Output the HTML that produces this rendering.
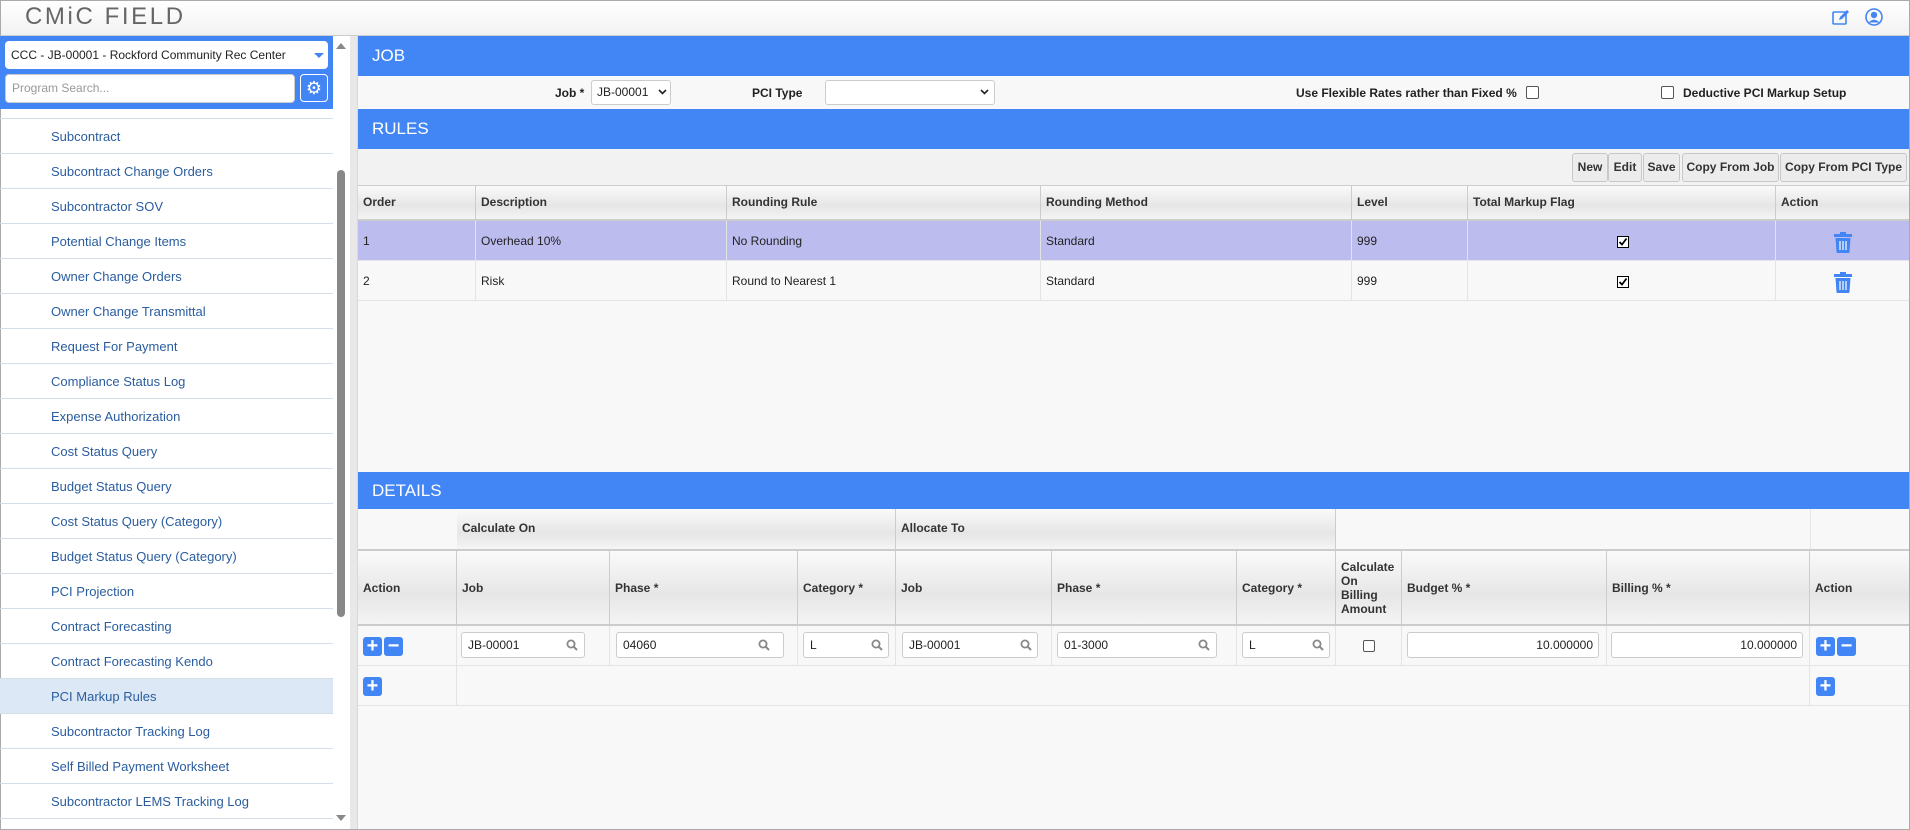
<!DOCTYPE html>
<html style="overflow:hidden;width:1910px;height:830px"><head><meta charset="utf-8"><style>
*{box-sizing:border-box;margin:0;padding:0}
body{width:1910px;height:830px;overflow:hidden;background:#fff;font-family:"Liberation Sans",Arial,sans-serif;font-size:12px;color:#222;position:relative}
.a{position:absolute}
.hdr{left:0;top:0;width:1910px;height:36px;background:linear-gradient(#fff,#f2f2f2);border:1px solid #aaa;border-bottom:1px solid #ccc}
.logo{left:25px;top:3px;font-size:24px;color:#666;letter-spacing:2.6px;font-weight:normal}
.side{left:0;top:36px;width:333px;height:794px;background:#fff;border-left:1px solid #aaa}
.sb{left:0;top:36px;width:333px;height:73px;background:#4285f4}
.item{left:0;width:333px;height:35px;border-bottom:1px solid #d5dde6;color:#2a5d9f;font-size:13px;line-height:35px;padding-left:51px}
.bar{left:358px;width:1551px;background:#4285f4;color:#fff;font-size:17px;padding-left:14px}
.th{background:linear-gradient(#fafafa,#e6e6e6 60%,#f4f4f4);border-right:1px solid #ccc;border-bottom:2px solid #ccc;font-weight:bold;color:#333;font-size:12px;padding-left:5px}
.td{border-right:1px solid #e4e4e4;border-bottom:1px solid #e4e4e4;font-size:12px;padding-left:5px}
.btn{top:153px;height:29px;border:1px solid #c8c8c8;border-radius:3px;background:#ececec;font-weight:bold;font-size:12px;line-height:27px;text-align:center;color:#333}
.inp{height:26px;background:#fff;border:1px solid #ccc;border-radius:3px;font-size:12px;line-height:24px;padding-left:6px}
.cb{width:13px;height:13px;border:1px solid #555;border-radius:2px;background:#fff}
.pm{width:19px;height:19px;background:#4285f4;border-radius:3px;color:#fff;font-weight:bold;font-size:20px;line-height:18px;text-align:center}
.mg{width:12px;height:12px}
</style></head><body>
<div class="a hdr"></div>
<div class="a logo">CMiC FIELD</div>
<svg class="a" style="left:1832px;top:9px" width="18" height="17" viewBox="0 0 18 17"><rect x="1" y="3" width="13" height="12" fill="none" stroke="#4285f4" stroke-width="1.6" rx="1"/><path d="M7 11 L8 8 L15 1 L17 3 L10 10 Z" fill="#4285f4"/></svg>
<svg class="a" style="left:1865px;top:8px" width="18" height="18" viewBox="0 0 18 18"><circle cx="9" cy="9" r="8" fill="none" stroke="#4285f4" stroke-width="1.6"/><circle cx="9" cy="7" r="3.2" fill="#4285f4"/><path d="M3.5 14.5 Q9 9 14.5 14.5" fill="#4285f4"/></svg>

<div class="a side"></div>
<div class="a sb"></div>
<div class="a" style="left:5px;top:41px;width:323px;height:28px;background:#fff;border-radius:4px;font-size:12px;line-height:28px;padding-left:6px;color:#222">CCC - JB-00001 - Rockford Community Rec Center</div>
<div class="a" style="left:314px;top:53px;width:0;height:0;border-left:5px solid transparent;border-right:5px solid transparent;border-top:5px solid #4285f4"></div>
<div class="a" style="left:5px;top:74px;width:290px;height:29px;background:#fff;border-radius:4px;border:1px solid #ccc;font-size:12px;line-height:27px;padding-left:6px;color:#999">Program Search...</div>
<div class="a" style="left:300px;top:74px;width:28px;height:28px;border:1px solid #fff;border-radius:4px;color:#fff;font-size:18px;line-height:26px;text-align:center">⚙</div>

<div class="a" style="left:0;top:118px;width:333px;height:1px;background:#d5dde6"></div>
<div class="a item" style="top:119px">Subcontract</div>
<div class="a item" style="top:154px">Subcontract Change Orders</div>
<div class="a item" style="top:189px">Subcontractor SOV</div>
<div class="a item" style="top:224px">Potential Change Items</div>
<div class="a item" style="top:259px">Owner Change Orders</div>
<div class="a item" style="top:294px">Owner Change Transmittal</div>
<div class="a item" style="top:329px">Request For Payment</div>
<div class="a item" style="top:364px">Compliance Status Log</div>
<div class="a item" style="top:399px">Expense Authorization</div>
<div class="a item" style="top:434px">Cost Status Query</div>
<div class="a item" style="top:469px">Budget Status Query</div>
<div class="a item" style="top:504px">Cost Status Query (Category)</div>
<div class="a item" style="top:539px">Budget Status Query (Category)</div>
<div class="a item" style="top:574px">PCI Projection</div>
<div class="a item" style="top:609px">Contract Forecasting</div>
<div class="a item" style="top:644px">Contract Forecasting Kendo</div>
<div class="a item" style="top:679px;background:#dce8f5">PCI Markup Rules</div>
<div class="a item" style="top:714px">Subcontractor Tracking Log</div>
<div class="a item" style="top:749px">Self Billed Payment Worksheet</div>
<div class="a item" style="top:784px">Subcontractor LEMS Tracking Log</div>

<div class="a" style="left:333px;top:36px;width:17px;height:794px;background:#fff"></div>
<div class="a" style="left:336px;top:43px;border-left:5px solid transparent;border-right:5px solid transparent;border-bottom:6px solid #888"></div>
<div class="a" style="left:337px;top:170px;width:8px;height:447px;background:#888;border-radius:4px"></div>
<div class="a" style="left:336px;top:815px;border-left:5px solid transparent;border-right:5px solid transparent;border-top:6px solid #888"></div>
<div class="a" style="left:350px;top:36px;width:8px;height:794px;background:#e8e8e8;border-right:1px solid #d8d8d8"></div>
<div class="a" style="left:358px;top:36px;width:1551px;height:793px;background:#f8f8f8"></div>
<div class="a" style="left:1909px;top:0;width:1px;height:830px;background:#aaa"></div>
<div class="a" style="left:0;top:829px;width:1910px;height:1px;background:#aaa"></div>

<div class="a bar" style="top:36px;height:40px;line-height:40px">JOB</div>
<div class="a" style="left:555px;top:86px;font-weight:bold;font-size:12px">Job *</div>
<div class="a inp" style="left:591px;top:80px;width:80px;height:25px;line-height:23px;padding-left:5px">JB-00001</div>
<svg class="a" style="left:658px;top:89px" width="9" height="6"><path d="M1 1 L4.5 4.5 L8 1" stroke="#222" stroke-width="1.6" fill="none"/></svg>
<div class="a" style="left:752px;top:86px;font-weight:bold">PCI Type</div>
<div class="a inp" style="left:825px;top:80px;width:170px;height:25px"></div>
<svg class="a" style="left:980px;top:89px" width="9" height="6"><path d="M1 1 L4.5 4.5 L8 1" stroke="#222" stroke-width="1.6" fill="none"/></svg>
<div class="a" style="left:1296px;top:86px;font-weight:bold">Use Flexible Rates rather than Fixed %</div>
<div class="a cb" style="left:1526px;top:86px"></div>
<div class="a cb" style="left:1661px;top:86px"></div>
<div class="a" style="left:1683px;top:86px;font-weight:bold">Deductive PCI Markup Setup</div>

<div class="a bar" style="top:109px;height:40px;line-height:40px">RULES</div>
<div class="a" style="left:358px;top:149px;width:1551px;height:37px;background:#f2f2f2;border-bottom:1px solid #ccc"></div>
<div class="a btn" style="left:1572px;width:36px">New</div>
<div class="a btn" style="left:1608px;width:34px">Edit</div>
<div class="a btn" style="left:1643px;width:37px">Save</div>
<div class="a btn" style="left:1682px;width:97px">Copy From Job</div>
<div class="a btn" style="left:1780px;width:127px">Copy From PCI Type</div>

<div class="a th" style="left:358px;top:186px;width:118px;height:35px;line-height:33px">Order</div>
<div class="a th" style="left:476px;top:186px;width:251px;height:35px;line-height:33px">Description</div>
<div class="a th" style="left:727px;top:186px;width:314px;height:35px;line-height:33px">Rounding Rule</div>
<div class="a th" style="left:1041px;top:186px;width:311px;height:35px;line-height:33px">Rounding Method</div>
<div class="a th" style="left:1352px;top:186px;width:116px;height:35px;line-height:33px">Level</div>
<div class="a th" style="left:1468px;top:186px;width:308px;height:35px;line-height:33px">Total Markup Flag</div>
<div class="a th" style="left:1776px;top:186px;width:133px;height:35px;line-height:33px;border-right:0">Action</div>

<div class="a" style="left:358px;top:221px;width:1551px;height:40px;background:#bcbcef"></div>
<div class="a td" style="left:358px;top:221px;width:118px;height:40px;line-height:40px">1</div>
<div class="a td" style="left:476px;top:221px;width:251px;height:40px;line-height:40px">Overhead 10%</div>
<div class="a td" style="left:727px;top:221px;width:314px;height:40px;line-height:40px">No Rounding</div>
<div class="a td" style="left:1041px;top:221px;width:311px;height:40px;line-height:40px">Standard</div>
<div class="a td" style="left:1352px;top:221px;width:116px;height:40px;line-height:40px">999</div>
<div class="a td" style="left:1468px;top:221px;width:308px;height:40px"></div>
<div class="a td" style="left:1776px;top:221px;width:133px;height:40px;border-right:0"></div>
<div class="a td" style="left:358px;top:261px;width:118px;height:40px;line-height:40px">2</div>
<div class="a td" style="left:476px;top:261px;width:251px;height:40px;line-height:40px">Risk</div>
<div class="a td" style="left:727px;top:261px;width:314px;height:40px;line-height:40px">Round to Nearest 1</div>
<div class="a td" style="left:1041px;top:261px;width:311px;height:40px;line-height:40px">Standard</div>
<div class="a td" style="left:1352px;top:261px;width:116px;height:40px;line-height:40px">999</div>
<div class="a td" style="left:1468px;top:261px;width:308px;height:40px"></div>
<div class="a td" style="left:1776px;top:261px;width:133px;height:40px;border-right:0"></div>
<svg class="a" style="left:1617px;top:236px" width="12" height="12"><rect x=".5" y=".5" width="11" height="11" fill="#fff" stroke="#000"/><path d="M2.5 6 L5 8.5 L9.5 2.5" stroke="#000" stroke-width="1.8" fill="none"/></svg>
<svg class="a" style="left:1617px;top:276px" width="12" height="12"><rect x=".5" y=".5" width="11" height="11" fill="#fff" stroke="#000"/><path d="M2.5 6 L5 8.5 L9.5 2.5" stroke="#000" stroke-width="1.8" fill="none"/></svg>
<svg class="a" style="left:1834px;top:232px" width="18" height="21" viewBox="0 0 18 21"><path d="M6 0h6v2h6v3H0V2h6z M1.5 6h15l-1 14a1 1 0 0 1-1 1h-11a1 1 0 0 1-1-1z" fill="#4285f4"/><path d="M6 9v9M9 9v9M12 9v9" stroke="#fff" stroke-width="1.2"/></svg>
<svg class="a" style="left:1834px;top:272px" width="18" height="21" viewBox="0 0 18 21"><path d="M6 0h6v2h6v3H0V2h6z M1.5 6h15l-1 14a1 1 0 0 1-1 1h-11a1 1 0 0 1-1-1z" fill="#4285f4"/><path d="M6 9v9M9 9v9M12 9v9" stroke="#fff" stroke-width="1.2"/></svg>

<div class="a bar" style="top:472px;height:37px;line-height:37px">DETAILS</div>
<div class="a th" style="left:457px;top:509px;width:439px;height:40px;line-height:38px;border-bottom:0">Calculate On</div>
<div class="a th" style="left:896px;top:509px;width:440px;height:40px;line-height:38px;border-bottom:0">Allocate To</div>
<div class="a" style="left:1810px;top:509px;width:1px;height:40px;background:#e4e4e4"></div>

<div class="a th" style="left:358px;top:549px;width:99px;height:77px;line-height:75px;border-top:2px solid #ccc">Action</div>
<div class="a th" style="left:457px;top:549px;width:153px;height:77px;line-height:75px;border-top:2px solid #ccc">Job</div>
<div class="a th" style="left:610px;top:549px;width:188px;height:77px;line-height:75px;border-top:2px solid #ccc">Phase *</div>
<div class="a th" style="left:798px;top:549px;width:98px;height:77px;line-height:75px;border-top:2px solid #ccc">Category *</div>
<div class="a th" style="left:896px;top:549px;width:156px;height:77px;line-height:75px;border-top:2px solid #ccc">Job</div>
<div class="a th" style="left:1052px;top:549px;width:185px;height:77px;line-height:75px;border-top:2px solid #ccc">Phase *</div>
<div class="a th" style="left:1237px;top:549px;width:99px;height:77px;line-height:75px;border-top:2px solid #ccc">Category *</div>
<div class="a th" style="left:1336px;top:549px;width:66px;height:77px;line-height:14px;padding-top:9px;border-top:2px solid #ccc">Calculate<br>On<br>Billing<br>Amount</div>
<div class="a th" style="left:1402px;top:549px;width:205px;height:77px;line-height:75px;border-top:2px solid #ccc">Budget % *</div>
<div class="a th" style="left:1607px;top:549px;width:203px;height:77px;line-height:75px;border-top:2px solid #ccc">Billing % *</div>
<div class="a th" style="left:1810px;top:549px;width:99px;height:77px;line-height:75px;border-top:2px solid #ccc;border-right:0">Action</div>

<div class="a td" style="left:358px;top:626px;width:99px;height:40px"></div>
<div class="a td" style="left:457px;top:626px;width:153px;height:40px"></div>
<div class="a td" style="left:610px;top:626px;width:188px;height:40px"></div>
<div class="a td" style="left:798px;top:626px;width:98px;height:40px"></div>
<div class="a td" style="left:896px;top:626px;width:156px;height:40px"></div>
<div class="a td" style="left:1052px;top:626px;width:185px;height:40px"></div>
<div class="a td" style="left:1237px;top:626px;width:99px;height:40px"></div>
<div class="a td" style="left:1336px;top:626px;width:66px;height:40px"></div>
<div class="a td" style="left:1402px;top:626px;width:205px;height:40px"></div>
<div class="a td" style="left:1607px;top:626px;width:203px;height:40px"></div>
<div class="a td" style="left:1810px;top:626px;width:99px;height:40px;border-right:0"></div>
<div class="a td" style="left:358px;top:666px;width:99px;height:40px"></div>
<div class="a td" style="left:457px;top:666px;width:1353px;height:40px;border-right:1px solid #e4e4e4"></div>
<div class="a td" style="left:1810px;top:666px;width:99px;height:40px;border-right:0"></div>

<div class="a pm" style="left:363px;top:637px">+</div>
<div class="a pm" style="left:384px;top:637px">&minus;</div>
<div class="a pm" style="left:363px;top:677px">+</div>
<div class="a pm" style="left:1816px;top:637px">+</div>
<div class="a pm" style="left:1837px;top:637px">&minus;</div>
<div class="a pm" style="left:1816px;top:677px">+</div>

<div class="a inp" style="left:461px;top:632px;width:124px">JB-00001</div>
<div class="a inp" style="left:616px;top:632px;width:168px">04060</div>
<div class="a inp" style="left:803px;top:632px;width:86px">L</div>
<div class="a inp" style="left:902px;top:632px;width:136px">JB-00001</div>
<div class="a inp" style="left:1057px;top:632px;width:160px">01-3000</div>
<div class="a inp" style="left:1242px;top:632px;width:88px">L</div>
<svg class="a mg" style="left:566px;top:639px" viewBox="0 0 12 12"><circle cx="5" cy="5" r="3.6" fill="none" stroke="#888" stroke-width="1.8"/><path d="M7.6 7.6 L11 11" stroke="#888" stroke-width="2"/></svg>
<svg class="a mg" style="left:758px;top:639px" viewBox="0 0 12 12"><circle cx="5" cy="5" r="3.6" fill="none" stroke="#888" stroke-width="1.8"/><path d="M7.6 7.6 L11 11" stroke="#888" stroke-width="2"/></svg>
<svg class="a mg" style="left:871px;top:639px" viewBox="0 0 12 12"><circle cx="5" cy="5" r="3.6" fill="none" stroke="#888" stroke-width="1.8"/><path d="M7.6 7.6 L11 11" stroke="#888" stroke-width="2"/></svg>
<svg class="a mg" style="left:1020px;top:639px" viewBox="0 0 12 12"><circle cx="5" cy="5" r="3.6" fill="none" stroke="#888" stroke-width="1.8"/><path d="M7.6 7.6 L11 11" stroke="#888" stroke-width="2"/></svg>
<svg class="a mg" style="left:1198px;top:639px" viewBox="0 0 12 12"><circle cx="5" cy="5" r="3.6" fill="none" stroke="#888" stroke-width="1.8"/><path d="M7.6 7.6 L11 11" stroke="#888" stroke-width="2"/></svg>
<svg class="a mg" style="left:1312px;top:639px" viewBox="0 0 12 12"><circle cx="5" cy="5" r="3.6" fill="none" stroke="#888" stroke-width="1.8"/><path d="M7.6 7.6 L11 11" stroke="#888" stroke-width="2"/></svg>
<div class="a cb" style="left:1363px;top:640px;width:12px;height:12px"></div>
<div class="a inp" style="left:1407px;top:632px;width:192px;text-align:right;padding-right:5px">10.000000</div>
<div class="a inp" style="left:1611px;top:632px;width:192px;text-align:right;padding-right:5px">10.000000</div>
</body></html>
